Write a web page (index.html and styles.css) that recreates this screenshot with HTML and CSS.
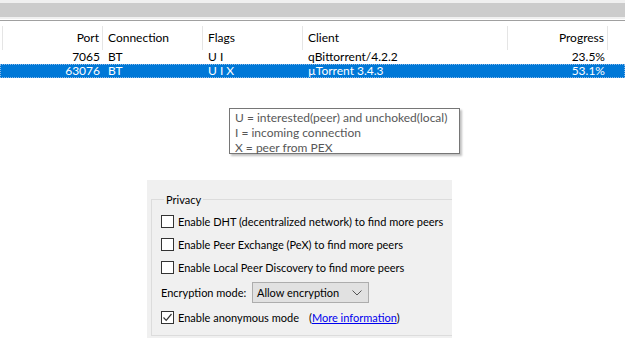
FILE: index.html
```html
<!DOCTYPE html>
<html>
<head>
<meta charset="utf-8">
<link rel="stylesheet" href="styles.css">
</head>
<body>
<div class="topbar"><div class="scroll"></div></div>
<div class="sep"></div>
<div class="table">
  <div class="row head">
    <div class="c c0"></div>
    <div class="c num">Port</div>
    <div class="c">Connection</div>
    <div class="c">Flags</div>
    <div class="c">Client</div>
    <div class="c num">Progress</div>
    <div class="c clast"></div>
  </div>
  <div class="row">
    <div class="c c0"></div>
    <div class="c num">7065</div>
    <div class="c">BT</div>
    <div class="c">U I</div>
    <div class="c">qBittorrent/4.2.2</div>
    <div class="c num">23.5%</div>
    <div class="c clast"></div>
  </div>
  <div class="row sel">
    <div class="c c0"></div>
    <div class="c num">63076</div>
    <div class="c">BT</div>
    <div class="c">U I X</div>
    <div class="c">µTorrent 3.4.3</div>
    <div class="c num">53.1%</div>
    <div class="c clast"></div>
  </div>
</div>
<div class="tooltip">
  <div>U = interested(peer) and unchoked(local)</div>
  <div>I = incoming connection</div>
  <div>X = peer from PEX</div>
</div>
<div class="panel">
  <fieldset class="group">
    <legend>Privacy</legend>
    <label class="opt"><span class="box"></span>Enable DHT (decentralized network) to find more peers</label>
    <label class="opt"><span class="box"></span>Enable Peer Exchange (PeX) to find more peers</label>
    <label class="opt"><span class="box"></span>Enable Local Peer Discovery to find more peers</label>
    <div class="enc">
      <span class="enc-label">Encryption mode:</span>
      <span class="combo"><span>Allow encryption</span>
        <svg width="10" height="6" viewBox="0 0 10 6"><path d="M0.5 0.5 L5 5 L9.5 0.5" fill="none" stroke="#555" stroke-width="1"/></svg>
      </span>
    </div>
    <label class="opt"><span class="box checked"><svg width="11" height="11" viewBox="0 0 11 11"><path d="M1.5 5.5 L4.2 8.3 L9.5 2" fill="none" stroke="#333" stroke-width="1.2"/></svg></span><span class="anon">Enable anonymous mode</span><span class="more">(<a href="#">More information</a>)</span></label>
  </fieldset>
</div>
</body>
</html>
```
FILE: styles.css
```css
* { box-sizing: border-box; }
html, body { margin: 0; padding: 0; }
body {
  width: 625px; height: 363px; overflow: hidden; background: #fff;
  font-family: "Lato", "Liberation Sans", sans-serif; font-size: 12px; color: #000;
  position: relative;
}
.topbar { height: 19px; background: #f0f0f0; padding-top: 3px; }
.scroll { height: 14px; background: #cccccc; }
.sep { height: 2px; border-top: 1px solid #fff; border-bottom: 1px solid #a0a0a0; background: #fff; }
.table { margin-top: 5px; }
.row { display: grid; grid-template-columns: 3px 100px 100px 100px 205px 100px 17px; height: 14px; line-height: 14px; }
.row .c { padding: 0 5px; white-space: nowrap; overflow: hidden; }
.row .c0, .row .clast { padding: 0; }
.row .num { text-align: right; padding-right: 3px; }
.head { height: 24px; line-height: 24px; margin-bottom: 0; }
.head .c { border-right: 1px solid #e5e5e5; }
.head .clast { border-right: none; }
.sel { background: #0078d7; color: #fff; outline: 1px dotted #8ab8e8; outline-offset: -1px; }
.tooltip {
  position: absolute; left: 229px; top: 108px; width: 231px; height: 46px;
  border: 1px solid #767676; background: #fff; color: #575757;
  padding: 1px 0 0 5px; line-height: 15px; font-size: 12px; white-space: nowrap;
  box-shadow: 2px 2px 2px rgba(0,0,0,0.25);
}
.panel { margin: 102px 0 0 147px; width: 305px; height: 158px; background: #f0f0f0; padding: 14px 0 0 4px; font-size: 11px; }
.group { margin: 0; border: 1px solid #dcdcdc; border-right: none; padding: 5px 0 0 9px; height: 142px; }
.group legend { padding: 0 2px; margin-left: 3px; line-height: 11px; margin-top: -1px; }
.opt { display: flex; align-items: center; height: 23px; white-space: nowrap; }
.box { width: 13px; height: 13px; border: 1px solid #333; background: #fff; margin-right: 4px; display: inline-flex; align-items: center; justify-content: center; }
.box.checked svg { display: block; }
.enc { display: flex; align-items: center; height: 27px; }
.enc-label { width: 91px; }
.combo { width: 117px; height: 21px; border: 1px solid #adadad; background: #e1e1e1; display: inline-flex; align-items: center; justify-content: space-between; padding: 0 6px 0 4px; }
.anon { width: 131px; }
.more a { color: #0000ee; text-decoration: underline; }
```
